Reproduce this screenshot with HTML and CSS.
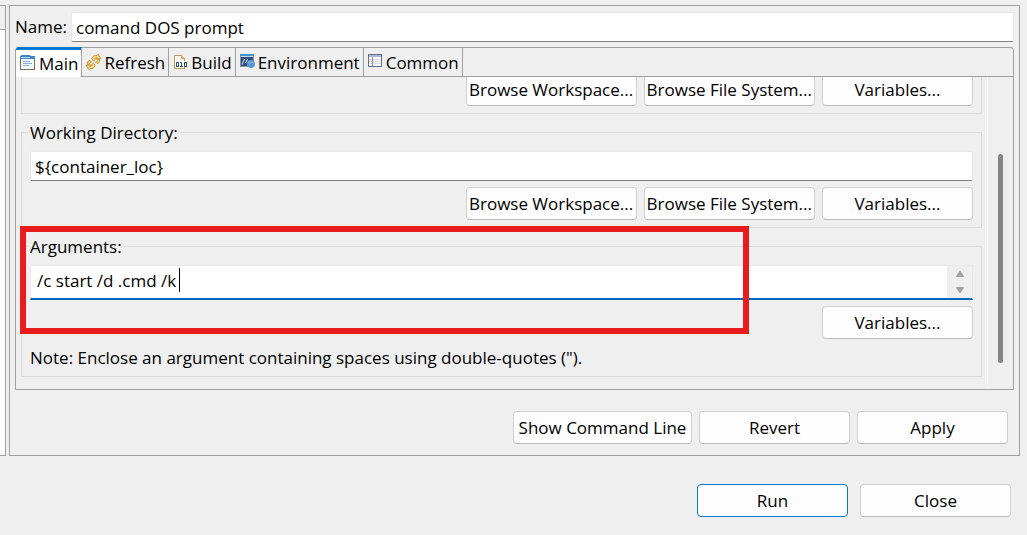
FILE: index.html
```html
<!DOCTYPE html>
<html lang="en">
<head>
    <meta charset="UTF-8">
    <meta name="viewport" content="width=device-width, initial-scale=1.0">
    <title>External Tools Configurations</title>
    <link rel="stylesheet" href="styles.css">
</head>
<body>
    <div class="workarea">
        <div class="tree-pane">
            <div class="tree-toolbar"></div>
        </div>

        <main class="editor">
            <div class="name-row">
                <label for="name">Name:</label>
                <input class="text-field" type="text" id="name" value="comand DOS prompt">
            </div>

            <div class="tab-folder">
                <div class="tabs">
                    <button class="tab active">
                        <svg class="icon" viewBox="0 0 16 16">
                            <rect x=".5" y="1.500" width="14" height="13" fill="#f1f8ff" stroke="#77704d"/>
                            <path d="M0 4V1l2-1h8l1 1h4v3z" fill="#4385c4"/>
                            <path d="M1 2.500h9" stroke="#b8dcf5"/>
                            <path d="M3 6.500h7M3 8.500h9M3 10.500h6" stroke="#8ea9d0"/>
                        </svg>
                        Main
                    </button>
                    <button class="tab">
                        <svg class="icon" viewBox="0 0 16 16">
                            <g fill="#fbdc86" stroke="#c58a2b" stroke-width=".9" stroke-linejoin="round">
                                <path id="arrow" d="M6 4.500C6.500 2 9 .8 11 1.500l1-1.200 2.800 4.200-4.600.6.900-1.300C9.700 3.400 9 4 9.200 5.500L7.500 7z"/>
                                <path d="M13.500 5.500c1 2-.5 4-2.500 4L9.500 7.800c1.500.2 2.300-.8 2-2z"/>
                                <path d="M9 11.500c-.5 2.500-3 3.700-5 3l-1 1.200L.2 11.500l4.600-.6-.9 1.300c1.400.4 2.100-.2 1.900-1.700L7.500 9z"/>
                                <path d="M1.500 10.500c-1-2 .5-4 2.500-4l1.500 1.700c-1.500-.2-2.300.8-2 2z"/>
                            </g>
                        </svg>
                        Refresh
                    </button>
                    <button class="tab">
                        <svg class="icon" viewBox="0 0 16 16">
                            <path d="M1.500 14.500v-13h7l3 3v10z" fill="#fffdf5" stroke="#bd9a54"/>
                            <path d="M8.500 1.500v3h3" fill="#f2dba6" stroke="#bd9a54"/>
                            <rect x="2" y="7" width="12" height="6" fill="#fffdf5"/>
                            <g fill="none" stroke="#2c4f86">
                                <rect x="3.500" y="8.500" width="2" height="4"/>
                                <path d="M7 8.500h1.500v4M7 12.500h3"/>
                                <rect x="11.500" y="8.500" width="2" height="4"/>
                            </g>
                        </svg>
                        Build
                    </button>
                    <button class="tab">
                        <svg class="icon" viewBox="0 0 16 16">
                            <rect x=".5" y=".5" width="13" height="12" fill="#31507f" stroke="#8795a8"/>
                            <path d="M0 0h14v2H0z" fill="#4a90c8"/>
                            <path d="M1 2.500h12" stroke="#c5ddec"/>
                            <path d="M2 10.500 4.500 5M5.500 9 7.500 5" stroke="#dce6f2" fill="none"/>
                            <circle cx="11" cy="10" r="4" fill="#5a98d2"/>
                            <path d="M8 9c2-1.500 4-1 5.500-.5" stroke="#91bfe6" fill="none"/>
                        </svg>
                        Environment
                    </button>
                    <button class="tab">
                        <svg class="icon" viewBox="0 0 16 16">
                            <rect x=".5" y=".5" width="13" height="12" fill="#fff" stroke="#65718c"/>
                            <path d="M1 2h12" stroke="#a9b9d3" stroke-width="2"/>
                            <path d="M1 5.500h12M1 7.500h12M1 9.500h12" stroke="#d5dae4"/>
                            <path d="M4.500 3v9" stroke="#8290ad"/>
                        </svg>
                        Common
                    </button>
                </div>

                <div class="tab-body">
                    <div class="viewport">
                        <fieldset class="group">
                            <div class="button-row">
                                <button class="btn wide">Browse Workspace...</button>
                                <button class="btn wide">Browse File System...</button>
                                <button class="btn">Variables...</button>
                            </div>
                        </fieldset>

                        <fieldset class="group">
                            <legend><label for="workdir">Working Directory:</label></legend>
                            <input class="text-field" type="text" id="workdir" value="${container_loc}">
                            <div class="button-row">
                                <button class="btn wide">Browse Workspace...</button>
                                <button class="btn wide">Browse File System...</button>
                                <button class="btn">Variables...</button>
                            </div>
                        </fieldset>

                        <div class="marked">
                            <fieldset class="group">
                                <legend><label for="arguments">Arguments:</label></legend>
                                <div class="args-field">
                                    <textarea id="arguments" rows="1">/c start /d .cmd /k</textarea>
                                    <span class="caret"></span>
                                    <div class="spinner">
                                        <button aria-label="Scroll up"><svg viewBox="0 0 10 8"><path d="M1 6.500 4.500 1h1L9 6.500 8.500 7h-7z" fill="#a0a0a0"/></svg></button>
                                        <button aria-label="Scroll down"><svg viewBox="0 0 10 8"><path d="M1 1.500 4.500 7h1L9 1.500 8.500 1h-7z" fill="#a0a0a0"/></svg></button>
                                    </div>
                                </div>
                                <div class="button-row">
                                    <button class="btn">Variables...</button>
                                </div>
                                <p class="note">Note: Enclose an argument containing spaces using double-quotes (").</p>
                            </fieldset>
                            <div class="highlight"></div>
                        </div>
                    </div>
                    <div class="scrollbar"><div class="thumb"></div></div>
                </div>
            </div>

            <div class="button-row editor-actions">
                <button class="btn extra-wide">Show Command Line</button>
                <button class="btn">Revert</button>
                <button class="btn">Apply</button>
            </div>
        </main>
    </div>

    <div class="dialog-actions">
        <button class="btn default">Run</button>
        <button class="btn">Close</button>
    </div>
</body>
</html>
```
FILE: styles.css
```css
* {
    box-sizing: border-box;
}
body {
    margin: 0;
    background-color: #efefef;
    overflow: hidden;
}
body, button, input, textarea {
    font-family: "Open Sans", "Noto Sans", sans-serif;
    font-size: 17px;
    line-height: 22px;
    color: #000;
}
.workarea {
    display: flex;
    gap: 3px;
    padding: 5px 7px 0 0;
}
.tree-pane {
    flex: 0 0 6px;
    background-color: #fff;
    border: 1px solid #a0a0a0;
    border-left: none;
}
.tree-toolbar {
    height: 24px;
    background-color: #efefef;
    border-bottom: 1px solid #a0a0a0;
}
.editor {
    flex: 1;
    min-width: 0;
    padding: 6px 5px 11px;
    border: 1px solid #a0a0a0;
}
.name-row {
    display: flex;
    align-items: center;
    gap: 4px;
    margin-bottom: 5px;
}
.text-field {
    flex: 1;
    display: block;
    width: 100%;
    height: 30px;
    padding: 0 4px;
    background-color: #fff;
    border: 1px solid #e8e8e8;
    border-bottom-color: #808080;
    border-radius: 2px;
    outline: none;
}

/* tabs */
.tab-folder {
    border: 1px solid #a0a0a0;
    border-radius: 3px 3px 0 0;
}
.tabs {
    display: flex;
    height: 29px;
    border-bottom: 1px solid #a0a0a0;
}
.tab {
    display: flex;
    align-items: center;
    gap: 2px;
    padding: 2px 3px 0 4px;
    background: none;
    border: none;
    border-right: 1px solid #a0a0a0;
    white-space: nowrap;
}
.tab.active {
    height: 30px;
    margin-top: -1px;
    background-color: #fff;
    border-top: 3px solid #0078d4;
    border-radius: 3px 0 0 0;
    padding-top: 0;
    gap: 3px;
}
.icon {
    flex: none;
    width: 16px;
    height: 16px;
    margin-bottom: 2px;
}
.tab-body {
    display: flex;
}
.viewport {
    flex: 1;
    display: flex;
    flex-direction: column;
    justify-content: flex-end;
    gap: 6px;
    height: 312px;
    padding: 0 5px 12px;
    border-right: 1px solid #fff;
    overflow: hidden;
}
.scrollbar {
    flex: 0 0 25px;
    padding: 77px 10px 26px;
}
.thumb {
    width: 5px;
    height: 100%;
    background-color: #858585;
    border-radius: 3px;
}

/* groups */
.group {
    min-width: 0;
    margin: 0;
    padding: 7px 8px;
    border: 1px solid #dcdcdc;
}
.group legend {
    margin: 0 -2px;
    padding: 2px 2px 0;
}
.button-row {
    display: flex;
    justify-content: flex-end;
    gap: 7px;
    margin-top: 6px;
}
.btn {
    min-width: 151px;
    height: 33px;
    padding: 1px 2px 0;
    background-color: #fdfdfd;
    border: 1px solid #d0d0d0;
    border-bottom-color: #bababa;
    border-radius: 4px;
    white-space: nowrap;
}
.btn.wide {
    min-width: 171px;
}
.btn.extra-wide {
    min-width: 179px;
}
.btn.default {
    border-color: #0078d4;
}
.args-field {
    position: relative;
    display: flex;
    height: 35px;
    background-color: #fff;
    border: 1px solid #e8e8e8;
    border-bottom: 2px solid #0067c0;
}
.args-field textarea {
    flex: 1;
    padding: 4px 6px;
    background: none;
    border: none;
    outline: none;
    resize: none;
    overflow: hidden;
}
.caret {
    position: absolute;
    left: 148px;
    top: 2px;
    width: 1px;
    height: 24px;
    background-color: #000;
}
.spinner {
    display: flex;
    flex-direction: column;
    width: 25px;
    background-color: #efefef;
}
.spinner button {
    flex: 1;
    display: flex;
    align-items: center;
    justify-content: center;
    padding: 0;
    background: none;
    border: none;
}
.spinner svg {
    width: 10px;
    height: 8px;
}
.note {
    margin: 8px 0 0;
}
.marked {
    position: relative;
}
.highlight {
    position: absolute;
    left: -1px;
    top: -8px;
    width: 729px;
    height: 108px;
    border: 6px solid #e81c1c;
    pointer-events: none;
}

.editor-actions {
    margin-top: 21px;
    padding-right: 6px;
}
.dialog-actions {
    display: flex;
    justify-content: flex-end;
    gap: 12px;
    padding: 28px 16px 18px 0;
}
```
